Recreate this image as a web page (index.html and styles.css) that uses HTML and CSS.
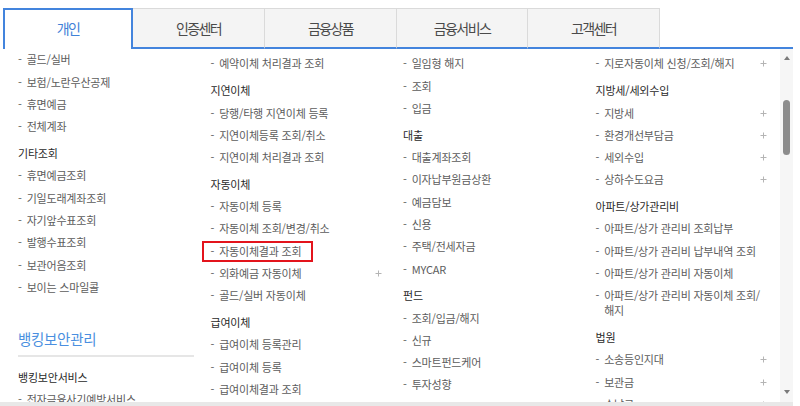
FILE: index.html
```html
<!DOCTYPE html>
<html lang="ko">
<head>
<meta charset="utf-8">
<title>개인 메뉴</title>
<link rel="stylesheet" href="styles.css">
</head>
<body>
<div class="tabs">
  <div class="tab active">개인</div>
  <div class="tab">인증센터</div>
  <div class="tab">금융상품</div>
  <div class="tab w131">금융서비스</div>
  <div class="tab">고객센터</div>
  <div class="fill"></div>
</div>
<div class="panel">
  <div class="cols">
    <ul class="col c1">
      <li class="i"><span>골드/실버</span></li>
      <li class="i"><span>보험/노란우산공제</span></li>
      <li class="i"><span>휴면예금</span></li>
      <li class="i"><span>전체계좌</span></li>
      <li class="h">기타조회</li>
      <li class="i"><span>휴면예금조회</span></li>
      <li class="i"><span>기일도래계좌조회</span></li>
      <li class="i"><span>자기앞수표조회</span></li>
      <li class="i"><span>발행수표조회</span></li>
      <li class="i"><span>보관어음조회</span></li>
      <li class="i"><span>보이는 스마일콜</span></li>
      <li class="big">뱅킹보안관리</li>
      <li class="h">뱅킹보안서비스</li>
      <li class="i"><span>전자금융사기예방서비스</span></li>
    </ul>
    <ul class="col">
      <li class="i"><span>예약이체 처리결과 조회</span></li>
      <li class="h">지연이체</li>
      <li class="i"><span>당행/타행 지연이체 등록</span></li>
      <li class="i"><span>지연이체등록 조회/취소</span></li>
      <li class="i"><span>지연이체 처리결과 조회</span></li>
      <li class="h">자동이체</li>
      <li class="i"><span>자동이체 등록</span></li>
      <li class="i"><span>자동이체 조회/변경/취소</span></li>
      <li class="i mark"><span>자동이체결과 조회</span></li>
      <li class="i"><span>외화예금 자동이체</span><svg class="plus" width="7" height="7" viewBox="0 0 7 7"><path d="M3.5 0.5v6M0.5 3.5h6" stroke="#b4b4b4" stroke-width="1"/></svg></li>
      <li class="i"><span>골드/실버 자동이체</span></li>
      <li class="h">급여이체</li>
      <li class="i"><span>급여이체 등록관리</span></li>
      <li class="i"><span>급여이체 등록</span></li>
      <li class="i"><span>급여이체결과 조회</span></li>
    </ul>
    <ul class="col">
      <li class="i"><span>일임형 해지</span></li>
      <li class="i"><span>조회</span></li>
      <li class="i"><span>입금</span></li>
      <li class="h">대출</li>
      <li class="i"><span>대출계좌조회</span></li>
      <li class="i"><span>이자납부원금상환</span></li>
      <li class="i"><span>예금담보</span></li>
      <li class="i"><span>신용</span></li>
      <li class="i"><span>주택/전세자금</span></li>
      <li class="i"><span>MYCAR</span></li>
      <li class="h">펀드</li>
      <li class="i"><span>조회/입금/해지</span></li>
      <li class="i"><span>신규</span></li>
      <li class="i"><span>스마트펀드케어</span></li>
      <li class="i"><span>투자성향</span></li>
    </ul>
    <ul class="col">
      <li class="i"><span>지로자동이체 신청/조회/해지</span><svg class="plus" width="7" height="7" viewBox="0 0 7 7"><path d="M3.5 0.5v6M0.5 3.5h6" stroke="#b4b4b4" stroke-width="1"/></svg></li>
      <li class="h">지방세/세외수입</li>
      <li class="i"><span>지방세</span><svg class="plus" width="7" height="7" viewBox="0 0 7 7"><path d="M3.5 0.5v6M0.5 3.5h6" stroke="#b4b4b4" stroke-width="1"/></svg></li>
      <li class="i"><span>환경개선부담금</span><svg class="plus" width="7" height="7" viewBox="0 0 7 7"><path d="M3.5 0.5v6M0.5 3.5h6" stroke="#b4b4b4" stroke-width="1"/></svg></li>
      <li class="i"><span>세외수입</span><svg class="plus" width="7" height="7" viewBox="0 0 7 7"><path d="M3.5 0.5v6M0.5 3.5h6" stroke="#b4b4b4" stroke-width="1"/></svg></li>
      <li class="i"><span>상하수도요금</span><svg class="plus" width="7" height="7" viewBox="0 0 7 7"><path d="M3.5 0.5v6M0.5 3.5h6" stroke="#b4b4b4" stroke-width="1"/></svg></li>
      <li class="h">아파트/상가관리비</li>
      <li class="i"><span>아파트/상가 관리비 조회납부</span></li>
      <li class="i"><span>아파트/상가 관리비 납부내역 조회</span></li>
      <li class="i"><span>아파트/상가 관리비 자동이체</span></li>
      <li class="i"><span>아파트/상가 관리비 자동이체 조회/<br>해지</span></li>
      <li class="h">법원</li>
      <li class="i"><span>소송등인지대</span><svg class="plus" width="7" height="7" viewBox="0 0 7 7"><path d="M3.5 0.5v6M0.5 3.5h6" stroke="#b4b4b4" stroke-width="1"/></svg></li>
      <li class="i"><span>보관금</span><svg class="plus" width="7" height="7" viewBox="0 0 7 7"><path d="M3.5 0.5v6M0.5 3.5h6" stroke="#b4b4b4" stroke-width="1"/></svg></li>
      <li class="i"><span>수납금</span><svg class="plus" width="7" height="7" viewBox="0 0 7 7"><path d="M3.5 0.5v6M0.5 3.5h6" stroke="#b4b4b4" stroke-width="1"/></svg></li>
    </ul>
  </div>
  <div class="sbar">
    <span class="up"></span>
    <span class="thumb"></span>
    <span class="down"></span>
  </div>
</div>
<div class="foot"></div>
</body>
</html>
```

FILE: styles.css
```css
html, body {
  margin: 0;
  padding: 0;
  background: #fff;
}
body {
  width: 800px;
  height: 406px;
  overflow: hidden;
  font-family: "Noto Sans CJK KR", "Noto Sans", sans-serif;
}

/* tabs */
.tabs {
  display: flex;
  padding: 8px 0 0 3px;
  width: 790px;
}
.tab {
  box-sizing: border-box;
  width: 132px;
  height: 41px;
  background: #f4f4f4;
  border-top: 1px solid #dadada;
  border-right: 1px solid #dadada;
  border-bottom: 2px solid #4384dd;
  display: flex;
  align-items: center;
  justify-content: center;
  font-size: 14px;
  letter-spacing: -1.6px;
  color: #4a4a4a;
}
.tab.w131 { width: 131px; }
.tab.active {
  width: 130px;
  background: #fff;
  border: 2px solid #4384dd;
  border-bottom: 0;
  padding-bottom: 3px;
  color: #3f82d8;
}
.fill {
  flex: 1;
  align-self: flex-end;
  border-bottom: 2px solid #4384dd;
}

/* panel */
.panel {
  display: flex;
  margin-left: 3px;
  width: 790px;
  height: 353px;
  overflow: hidden;
}
.cols {
  flex: 1;
  display: grid;
  grid-template-columns: 192.5px 192.5px 192.5px 1fr;
  align-items: start;
  padding: 3.85px 0 0 15px;
}
.col {
  list-style: none;
  margin: 0;
  padding: 0;
}
.col.c1 { margin-top: -4px; }

.col li {
  display: flex;
  align-items: flex-start;
  width: 180px;
  font-size: 11px;
  line-height: 15px;
  padding: 3.65px 0;
  letter-spacing: -0.2px;
  white-space: nowrap;
  color: #5c5c5c;
}
.col li.i::before {
  content: "-";
  flex: 0 0 8.7px;
}
.col li.h {
  color: #2a2a2a;
  margin-top: 4.5px;
}
.col li.big {
  width: 176px;
  margin-top: 31px;
  margin-bottom: 9.5px;
  padding: 0 0 5.5px;
  font-size: 14.5px;
  line-height: 20px;
  letter-spacing: -0.3px;
  color: #4a8fe0;
  border-bottom: 2px solid #e6e6e6;
}
.plus {
  margin-left: auto;
  margin-right: 8.5px;
  align-self: center;
  flex-shrink: 0;
}
.col li.mark {
  position: relative;
}
.col li.mark::after {
  content: "";
  position: absolute;
  left: -9px;
  top: 1px;
  width: 111px;
  height: 21px;
  box-sizing: border-box;
  border: 2px solid #e3141c;
}

/* scrollbar */
.sbar {
  width: 13px;
  background: #f6f6f6;
  display: flex;
  flex-direction: column;
  align-items: center;
}
.up {
  margin-top: 7px;
  width: 0;
  height: 0;
  border-left: 3.5px solid transparent;
  border-right: 3.5px solid transparent;
  border-bottom: 4px solid #7a7a7a;
}
.thumb {
  margin-top: 40px;
  width: 7px;
  height: 55px;
  border-radius: 3.5px;
  background: #8c8c8c;
}
.down {
  margin-top: auto;
  margin-bottom: 8px;
  width: 0;
  height: 0;
  border-left: 3.5px solid transparent;
  border-right: 3.5px solid transparent;
  border-top: 4px solid #7a7a7a;
}

.foot {
  width: 793px;
  height: 4px;
  background: #e8e8e8;
}
```
